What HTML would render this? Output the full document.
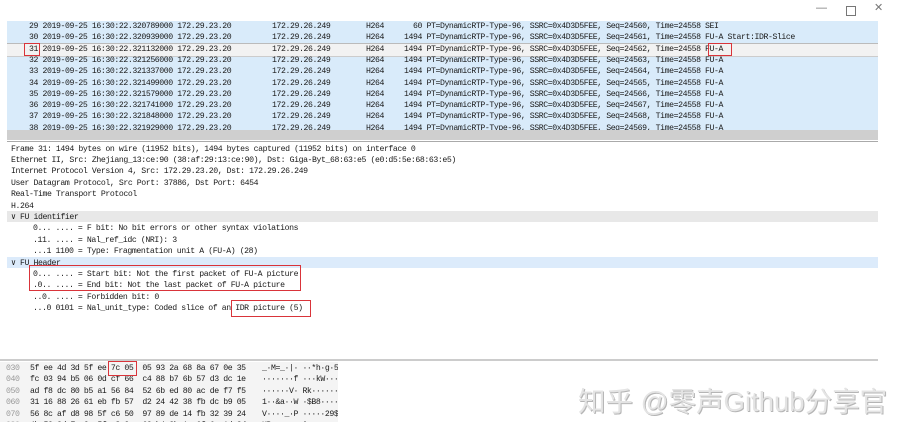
<!DOCTYPE html>
<html><head><meta charset="utf-8"><style>
body{margin:0;width:902px;height:436px;background:#fff;position:relative;overflow:hidden;font-family:"Liberation Mono",monospace;font-size:8.2px;letter-spacing:-0.42px;color:#1a1a1a}
.a{position:absolute;white-space:pre;line-height:11px}
.box{position:absolute;border:1.5px solid #d9343a}
</style></head><body>
<div class="a" style="left:816px;top:3px;font-family:'Liberation Sans',sans-serif;font-size:11px;color:#777">—</div>
<div style="position:absolute;left:846px;top:6px;width:8px;height:8px;border:1px solid #777"></div>
<div class="a" style="left:874px;top:3px;font-family:'Liberation Sans',sans-serif;font-size:11px;color:#777">✕</div>
<div style="position:absolute;left:7px;top:21px;width:871px;height:110px;background:#d9ebfa"></div>
<div style="position:absolute;left:7px;top:43px;width:871px;height:12px;background:#f2f2f2;border-top:1px solid #bbb;border-bottom:1px solid #ccc"></div>
<div id="pl"></div>
<div style="position:absolute;left:7px;top:130px;width:871px;height:10px;background:#cfcfcf"></div>
<div style="position:absolute;left:7px;top:141px;width:871px;height:1px;background:#aaa"></div>
<div class="box" style="left:24px;top:43px;width:14px;height:11px"></div>
<div class="box" style="left:708px;top:43px;width:22px;height:11px"></div>
<div style="position:absolute;left:7px;top:211px;width:871px;height:11px;background:#e8e8e8"></div>
<div style="position:absolute;left:7px;top:257px;width:871px;height:11px;background:#dcebfb"></div>
<div id="dt"></div>
<div class="box" style="left:29px;top:265px;width:270px;height:24px"></div>
<div class="box" style="left:231px;top:300px;width:78px;height:15px"></div>
<div style="position:absolute;left:0;top:359px;width:878px;height:2px;background:#ccc"></div>
<div style="position:absolute;left:0;top:362px;width:338px;height:60px;background:#f4f4f4;overflow:hidden" id="hxw"></div>
<div class="box" style="left:108px;top:361px;width:27px;height:13px"></div>
<div class="a" style="left:578px;top:386px;font-family:'Liberation Sans','Noto Sans CJK SC',sans-serif;font-size:27.5px;letter-spacing:0;line-height:32px;color:#e4e4e4;text-shadow:1px 1px 0 #b5b5b5">知乎 @零声Github分享官</div>
<script>
var y0=21,h=11.3,s='';
for(var i=0;i<10;i++){var n=29+i,t=[320789,320939,321132,321256,321337,321499,321579,321741,321848,321929][i];
var info='PT=DynamicRTP-Type-96, SSRC=0x4D3D5FEE, Seq='+(24560+i)+', Time=24558 '+(i==0?'SEI':i==1?'FU-A Start:IDR-Slice':'FU-A');
var y=y0+i*h;
s+='<div class="a" style="left:29px;top:'+y+'px">'+n+' 2019-09-25 16:30:22.'+t+'000 172.29.23.20</div>';
s+='<div class="a" style="left:272px;top:'+y+'px">172.29.26.249</div>';
s+='<div class="a" style="left:366px;top:'+y+'px">H264</div>';
s+='<div class="a" style="left:404px;top:'+y+'px">'+(i==0?'  60':'1494')+' '+info+'</div>';}
document.getElementById('pl').innerHTML=s;
var d=[[11,'Frame 31: 1494 bytes on wire (11952 bits), 1494 bytes captured (11952 bits) on interface 0'],
[11,'Ethernet II, Src: Zhejiang_13:ce:90 (38:af:29:13:ce:90), Dst: Giga-Byt_68:63:e5 (e0:d5:5e:68:63:e5)'],
[11,'Internet Protocol Version 4, Src: 172.29.23.20, Dst: 172.29.26.249'],
[11,'User Datagram Protocol, Src Port: 37886, Dst Port: 6454'],
[11,'Real-Time Transport Protocol'],[11,'H.264'],[11,'\u2228 FU identifier'],
[33,'0... .... = F bit: No bit errors or other syntax violations'],
[33,'.11. .... = Nal_ref_idc (NRI): 3'],
[33,'...1 1100 = Type: Fragmentation unit A (FU-A) (28)'],
[11,'\u2228 FU Header'],
[33,'0... .... = Start bit: Not the first packet of FU-A picture'],
[33,'.0.. .... = End bit: Not the last packet of FU-A picture'],
[33,'..0. .... = Forbidden bit: 0'],
[33,'...0 0101 = Nal_unit_type: Coded slice of an IDR picture (5)']];
s='';d.forEach(function(l,i){s+='<div class="a" style="left:'+l[0]+'px;top:'+(143.5+i*11.4)+'px">'+l[1]+'</div>';});
document.getElementById('dt').innerHTML=s;
var hx=[['030','5f ee 4d 3d 5f ee 7c 05  05 93 2a 68 8a 67 0e 35','_\u00b7M=_\u00b7|\u00b7 \u00b7\u00b7*h\u00b7g\u00b75'],
['040','fc 03 94 b5 06 0d cf 66  c4 88 b7 6b 57 d3 dc 1e','\u00b7\u00b7\u00b7\u00b7\u00b7\u00b7\u00b7f \u00b7\u00b7\u00b7kW\u00b7\u00b7\u00b7'],
['050','ad f8 dc 80 b5 a1 56 84  52 6b ed 80 ac de f7 f5','\u00b7\u00b7\u00b7\u00b7\u00b7\u00b7V\u00b7 Rk\u00b7\u00b7\u00b7\u00b7\u00b7\u00b7'],
['060','31 16 88 26 61 eb fb 57  d2 24 42 38 fb dc b9 05','1\u00b7\u00b7&a\u00b7\u00b7W \u00b7$B8\u00b7\u00b7\u00b7\u00b7'],
['070','56 8c af d8 98 5f c6 50  97 89 de 14 fb 32 39 24','V\u00b7\u00b7\u00b7\u00b7_\u00b7P \u00b7\u00b7\u00b7\u00b7\u00b729$'],
['080','4b 50 3d 7e 0a 5f c8 9a  60 b4 3b 1a 6f 6e 1d 3d','KP=~\u00b7_\u00b7\u00b7 `\u00b7;\u00b7on\u00b7=']];
s='';hx.forEach(function(r,i){var y=0.5+i*11.5;
s+='<div class="a" style="left:6px;top:'+y+'px;color:#999">'+r[0]+'</div><div class="a" style="left:30px;top:'+y+'px">'+r[1]+'</div><div class="a" style="left:262px;top:'+y+'px">'+r[2]+'</div>';});
document.getElementById('hxw').innerHTML=s;
</script>
</body></html>
